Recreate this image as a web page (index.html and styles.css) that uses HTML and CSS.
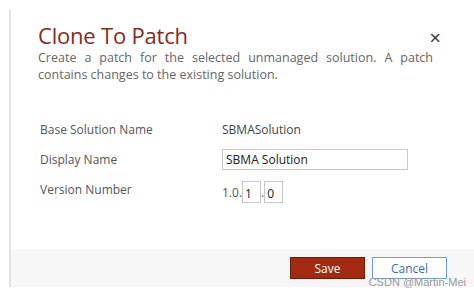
FILE: index.html
```html
<!DOCTYPE html>
<html lang="en">
<head>
    <meta charset="UTF-8">
    <meta name="viewport" content="width=device-width, initial-scale=1.0">
    <title>Clone To Patch</title>
    <link rel="stylesheet" href="styles.css">
</head>
<body>

    <div class="dialog">
        <div class="dialog-body">
            <div class="dialog-header">
                <h2>Clone To Patch</h2>
                <span class="close">&times;</span>
            </div>
            <p class="dialog-desc">Create a patch for the selected unmanaged solution. A patch contains changes to the existing solution.</p>

            <div class="form-grid">
                <label>Base Solution Name</label>
                <div class="value">SBMASolution</div>

                <label for="displayName">Display Name</label>
                <div><input type="text" id="displayName" class="text-input" value="SBMA Solution"></div>

                <label>Version Number</label>
                <div class="version">
                    <span>1.0.</span>
                    <input type="text" class="ver-input" value="1">
                    <span>.</span>
                    <input type="text" class="ver-input" value="0">
                </div>
            </div>
        </div>

        <div class="dialog-footer">
            <button class="btn btn-save">Save</button>
            <button class="btn btn-cancel">Cancel</button>
        </div>
    </div>

    <div class="watermark">CSDN @Martin-Mei</div>

</body>
</html>
```

FILE: styles.css
```css
body {
    font-family: 'Open Sans', 'Noto Sans', sans-serif;
    margin: 0;
    padding: 0;
    background-color: #fff;
    color: #444;
    width: 474px;
    height: 293px;
    overflow: hidden;
    position: relative;
}

.dialog {
    margin: 10px 0 0 9px;
    height: 277px;
    border-left: 2px solid #e2e2e2;
    display: flex;
    flex-direction: column;
}

.dialog-body {
    flex: 1;
    padding: 8px 41px 0 27px;
}

.dialog-header {
    display: flex;
    justify-content: space-between;
    align-items: center;
}

.dialog-header h2 {
    margin: 0;
    font-size: 22px;
    font-weight: 400;
    line-height: 28px;
    color: #862a1c;
    letter-spacing: -0.2px;
}

.close {
    font-size: 20px;
    color: #333;
    margin-right: -8px;
    margin-top: 6px;
}

.dialog-desc {
    margin: -2px 0 0;
    font-size: 12.5px;
    line-height: 17px;
    color: #666;
    text-align: justify;
}

.form-grid {
    display: grid;
    grid-template-columns: 182px 1fr;
    grid-auto-rows: 30px;
    align-items: center;
    margin-top: 31px;
    padding-left: 2px;
    font-size: 12px;
}

.form-grid label {
    color: #555;
}

.value {
    color: #444;
}

.text-input {
    width: 186px;
    height: 21px;
    box-sizing: border-box;
    border: 1px solid #c8c8c8;
    padding: 0 3px;
    font-family: inherit;
    font-size: 12px;
    color: #222;
}

.version {
    display: flex;
    align-items: center;
    margin-top: 6px;
    color: #555;
}

.ver-input {
    width: 19px;
    height: 22px;
    box-sizing: border-box;
    border: 1px solid #c8c8c8;
    padding: 2px 0 0 2px;
    font-family: inherit;
    font-size: 12px;
    color: #222;
}

.dialog-footer {
    height: 38px;
    background-color: #f7f7f7;
    display: flex;
    justify-content: flex-end;
    align-items: center;
    gap: 7px;
    padding-right: 27px;
}

.btn {
    width: 75px;
    height: 22px;
    font-family: inherit;
    font-size: 12px;
    cursor: pointer;
}

.btn-save {
    background: #a22a10;
    border: 1px solid #6e1c0a;
    color: #fff;
}

.btn-cancel {
    background: #fff;
    border: 1px solid #6b9fd6;
    color: #3a6db0;
}

.watermark {
    position: absolute;
    right: 8px;
    bottom: 5px;
    font-family: 'Liberation Sans', sans-serif;
    font-size: 11px;
    color: #9a9a9a;
}
```
